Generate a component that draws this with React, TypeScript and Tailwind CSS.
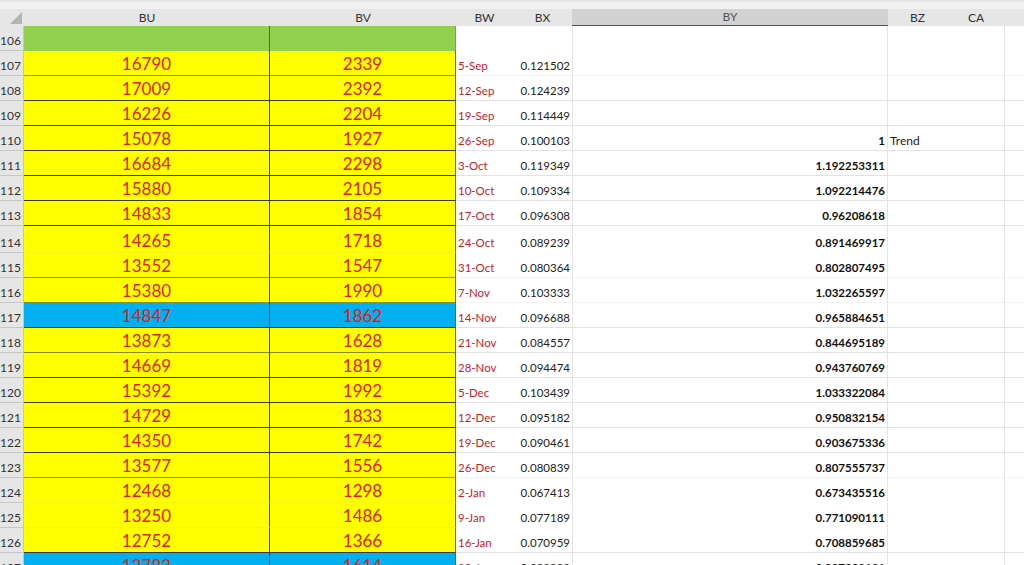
const rows: [number, string, string, string, string, string, string?][] = [
  [107, "16790", "2339", "5-Sep", "0.121502", ""],
  [108, "17009", "2392", "12-Sep", "0.124239", ""],
  [109, "16226", "2204", "19-Sep", "0.114449", ""],
  [110, "15078", "1927", "26-Sep", "0.100103", "1", "Trend"],
  [111, "16684", "2298", "3-Oct", "0.119349", "1.192253311"],
  [112, "15880", "2105", "10-Oct", "0.109334", "1.092214476"],
  [113, "14833", "1854", "17-Oct", "0.096308", "0.96208618"],
  [114, "14265", "1718", "24-Oct", "0.089239", "0.891469917"],
  [115, "13552", "1547", "31-Oct", "0.080364", "0.802807495"],
  [116, "15380", "1990", "7-Nov", "0.103333", "1.032265597"],
  [117, "14847", "1862", "14-Nov", "0.096688", "0.965884651"],
  [118, "13873", "1628", "21-Nov", "0.084557", "0.844695189"],
  [119, "14669", "1819", "28-Nov", "0.094474", "0.943760769"],
  [120, "15392", "1992", "5-Dec", "0.103439", "1.033322084"],
  [121, "14729", "1833", "12-Dec", "0.095182", "0.950832154"],
  [122, "14350", "1742", "19-Dec", "0.090461", "0.903675336"],
  [123, "13577", "1556", "26-Dec", "0.080839", "0.807555737"],
  [124, "12468", "1298", "2-Jan", "0.067413", "0.673435516"],
  [125, "13250", "1486", "9-Jan", "0.077189", "0.771090111"],
  [126, "12752", "1366", "16-Jan", "0.070959", "0.708859685"],
  [127, "12783", "1614", "23-Jan", "0.088888", "0.887888181"],
];

const softLines = [107, 115, 116, 118, 123];
const noLines = [114, 124, 125];
const faintWhite = [107, 114, 115, 116, 123, 124, 125];

function Row({ r }: { r: (typeof rows)[number] }) {
  const [n, bu, bv, bw, bx, by, bz] = r;
  const blue = n === 117 || n === 127;
  const fill = blue ? "bg-[#00b0f0]" : "bg-[#ffff00]";
  const h = n === 114 ? "h-[27px]" : "h-[25px]";
  const line = noLines.includes(n)
    ? "border-b-[#f4f41c]"
    : softLines.includes(n)
      ? "border-b-[#8c8c1c]"
      : "border-b-[#3c3c14]";
  const white = noLines.includes(n) ? "border-b-[#ffffff]" : faintWhite.includes(n) ? "border-b-[#f3f3f3]" : "border-b-[#e2e2e2]";
  return (
    <div className={`flex ${h} shrink-0`}>
      <div className="w-[24px] shrink-0 bg-[#e6e6e6] border-b border-r border-[#c6c6c6] flex items-end justify-end pr-[2px] pb-[2px] text-[12px] leading-[14px] text-[#333]">
        {n}
      </div>
      <div className={`w-[246px] shrink-0 ${fill} border-b border-r border-r-[#3c3c14] ${line} flex items-end justify-center pb-[1px] text-[#e3200f] text-[17px] leading-[21px]`}>
        {bu}
      </div>
      <div className={`w-[186px] shrink-0 ${fill} border-b border-r border-r-[#6c6c18] ${line} flex items-end justify-center pb-[1px] text-[#e3200f] text-[17px] leading-[21px]`}>
        {bv}
      </div>
      <div className={`w-[57px] shrink-0 border-b ${white} flex items-end pl-[2px] pb-[1px] text-[11.5px] leading-[16px] text-[#c8202c]`}>
        {bw}
      </div>
      <div className={`w-[60px] shrink-0 border-b border-r border-r-[#e4e4e4] ${white} flex items-end justify-end pr-[2px] pb-[1px] text-[11.5px] leading-[16px] text-[#222]`}>
        {bx}
      </div>
      <div className={`w-[315px] shrink-0 border-b border-r border-r-[#e4e4e4] ${white} flex items-end justify-end pr-[2px] pb-[1px] text-[11.5px] leading-[16px] font-bold text-[#111]`}>
        {by}
      </div>
      <div className={`w-[59px] shrink-0 border-b ${white} flex items-end pl-[2px] pb-[1px] text-[12px] leading-[16px] text-[#222]`}>
        {bz}
      </div>
      <div className={`w-[58px] shrink-0 border-b border-r border-r-[#e4e4e4] ${white}`} />
      <div className={`w-[19px] shrink-0 border-b ${white}`} />
    </div>
  );
}

function Head({ w, label, active }: { w: string; label: string; active?: boolean }) {
  return (
    <div
      className={`${w} shrink-0 flex items-center justify-center text-[12px] ${
        active ? "bg-[#d2d2d2] border-b border-[#1f6b45] text-[#555]" : "bg-[#e6e6e6] text-[#333]"
      }`}
    >
      {label}
    </div>
  );
}

export default function App() {
  return (
    <div className="w-[1024px] h-[565px] overflow-hidden bg-white flex flex-col font-['Lato','Open_Sans',sans-serif]">
      <div className="h-[9px] shrink-0 bg-[#f1f1f1] border-t-2 border-[#e6e6e6]" />
      <div className="flex h-[17px] shrink-0">
        <div className="w-[24px] shrink-0 bg-[#e6e6e6] flex items-end justify-end pr-[1px] pb-[1px]">
          <svg width="14" height="14" viewBox="0 0 14 14">
            <polygon points="13,1 13,13 1,13" fill="#b4b4b4" />
          </svg>
        </div>
        <Head w="w-[246px]" label="BU" />
        <Head w="w-[186px]" label="BV" />
        <Head w="w-[57px]" label="BW" />
        <Head w="w-[59px]" label="BX" />
        <Head w="w-[316px]" label="BY" active />
        <Head w="w-[59px]" label="BZ" />
        <Head w="w-[58px]" label="CA" />
        <Head w="w-[19px]" label="" />
      </div>
      <div className="flex h-[25px] shrink-0">
        <div className="w-[24px] shrink-0 bg-[#e6e6e6] border-b border-r border-[#c6c6c6] flex items-end justify-end pr-[2px] pb-[2px] text-[12px] leading-[14px] text-[#333]">
          106
        </div>
        <div className="w-[246px] shrink-0 bg-[#92d050] border-r border-[#4a6a30]" />
        <div className="w-[186px] shrink-0 bg-[#92d050] border-r border-[#7ea050]" />
        <div className="w-[57px] shrink-0" />
        <div className="w-[60px] shrink-0 border-r border-[#e4e4e4]" />
        <div className="w-[315px] shrink-0 border-r border-[#e4e4e4]" />
        <div className="w-[59px] shrink-0" />
        <div className="w-[58px] shrink-0 border-r border-[#e4e4e4]" />
      </div>
      {rows.map((r) => (
        <Row key={r[0]} r={r} />
      ))}
    </div>
  );
}
